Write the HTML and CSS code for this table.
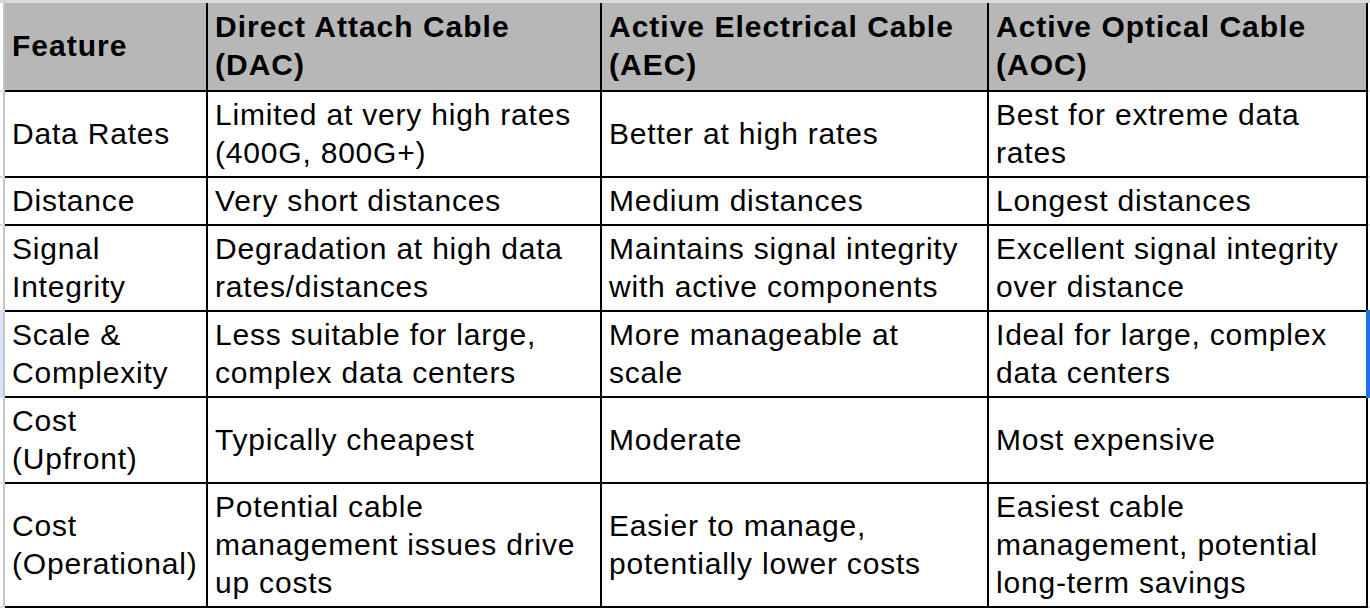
FILE: index.html
```html
<!DOCTYPE html>
<html lang="en">
<head>
<meta charset="utf-8">
<title>Cable comparison</title>
<link rel="stylesheet" href="styles.css">
</head>
<body>
<table class="sheet">
  <colgroup>
    <col class="c-gutter">
    <col class="c-feature">
    <col class="c-dac">
    <col class="c-aec">
    <col class="c-aoc">
    <col class="c-edge">
  </colgroup>
  <tr class="col-heads">
    <td></td><td></td><td></td><td></td><td></td><td></td>
  </tr>
  <tr class="head">
    <td class="gutter"></td>
    <th>Feature</th>
    <th>Direct Attach Cable<br>(DAC)</th>
    <th>Active Electrical Cable<br>(AEC)</th>
    <th>Active Optical Cable<br>(AOC)</th>
    <td class="edge"></td>
  </tr>
  <tr>
    <td class="gutter"></td>
    <td>Data Rates</td>
    <td>Limited at very high rates<br>(400G, 800G+)</td>
    <td>Better at high rates</td>
    <td>Best for extreme data<br>rates</td>
    <td class="edge"></td>
  </tr>
  <tr>
    <td class="gutter"></td>
    <td>Distance</td>
    <td>Very short distances</td>
    <td>Medium distances</td>
    <td>Longest distances</td>
    <td class="edge"></td>
  </tr>
  <tr>
    <td class="gutter"></td>
    <td>Signal<br>Integrity</td>
    <td>Degradation at high data<br>rates/distances</td>
    <td>Maintains signal integrity<br>with active components</td>
    <td>Excellent signal integrity<br>over distance</td>
    <td class="edge"></td>
  </tr>
  <tr class="selected">
    <td class="gutter"></td>
    <td>Scale &amp;<br>Complexity</td>
    <td>Less suitable for large,<br>complex data centers</td>
    <td>More manageable at<br>scale</td>
    <td class="active">Ideal for large, complex<br>data centers</td>
    <td class="edge"></td>
  </tr>
  <tr>
    <td class="gutter"></td>
    <td>Cost<br>(Upfront)</td>
    <td>Typically cheapest</td>
    <td>Moderate</td>
    <td>Most expensive</td>
    <td class="edge"></td>
  </tr>
  <tr>
    <td class="gutter"></td>
    <td>Cost<br>(Operational)</td>
    <td>Potential cable<br>management issues drive<br>up costs</td>
    <td>Easier to manage,<br>potentially lower costs</td>
    <td>Easiest cable<br>management, potential<br>long-term savings</td>
    <td class="edge"></td>
  </tr>
</table>
</body>
</html>
```
FILE: styles.css
```css
html, body {
  margin: 0;
  background: #ffffff;
}

body {
  font-family: "Liberation Sans", Arial, sans-serif;
  color: #000000;
}

.sheet {
  border-spacing: 0;
  border-collapse: separate;
  table-layout: fixed;
  width: 1370px;
}

.c-gutter { width: 5px; }
.c-feature { width: 203px; }
.c-dac { width: 394px; }
.c-aec { width: 387px; }
.c-aoc { width: 379px; }
.c-edge { width: 2px; }

.sheet td,
.sheet th {
  box-sizing: border-box;
  padding: 4px 5px 4px 7px;
  border-right: 2px solid #000000;
  border-bottom: 2px solid #000000;
  font-size: 30px;
  line-height: 38px;
  letter-spacing: 0.8px;
  font-weight: 400;
  text-align: left;
  vertical-align: middle;
  white-space: nowrap;
  overflow: hidden;
  background: #ffffff;
}

.sheet .head th {
  background: #b7b7b7;
  font-weight: 700;
  letter-spacing: 1px;
  padding: 5px 5px 6px 7px;
}

.sheet .col-heads td {
  height: 3px;
  padding: 0;
  border: none;
  background: #dadada;
  font-size: 0;
  line-height: 0;
}

.sheet .gutter {
  padding: 0;
  border-right: 2px solid #c6c6c6;
  border-bottom: 2px solid #e0e0e0;
  background: #ffffff;
}

.sheet .selected .gutter {
  background: #d3e3fd;
}

.sheet .edge {
  padding: 0;
  border-right: none;
  border-bottom: 2px solid #e3e3e3;
  background: #ffffff;
}

.sheet .active {
  position: relative;
  overflow: visible;
}

.sheet .active::after {
  content: "";
  position: absolute;
  top: -2px;
  bottom: -2px;
  right: -4px;
  width: 4px;
  background: #1a73e8;
}
```
